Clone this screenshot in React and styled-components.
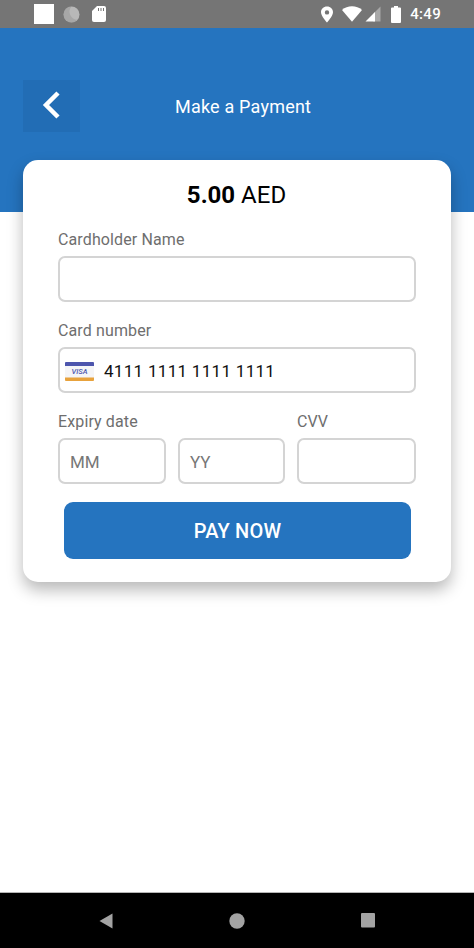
import React from "react";
import styled, { createGlobalStyle } from "styled-components";

const Global = createGlobalStyle`
  html, body { margin: 0; padding: 0; background: #fff; }
  * { box-sizing: border-box; }
  body { font-family: Roboto, "Liberation Sans", sans-serif; }
`;

const Screen = styled.div`
  width: 474px;
  height: 948px;
  display: flex;
  flex-direction: column;
  overflow: hidden;
  background: #fff;
`;

const StatusBar = styled.div`
  height: 28px;
  flex: none;
  background: #757575;
  display: flex;
  align-items: center;
  justify-content: space-between;
  padding: 0 33px 0 34px;
`;

const StatusGroup = styled.div`
  display: flex;
  align-items: center;
`;

const StatusIcon = styled.span`
  display: flex;
  margin-left: ${(p) => p.$ml ?? 0}px;
`;

const WhiteSquare = styled.div`
  width: 20px;
  height: 20px;
  background: #fff;
`;

const Clock = styled.span`
  color: #fff;
  font-size: 15px;
  font-weight: 500;
  letter-spacing: 0.3px;
  margin-left: 9px;
`;

const Header = styled.header`
  height: 184px;
  flex: none;
  background: #2574bf;
  padding: 52px 23px 0;
  display: flex;
  align-items: flex-start;
`;

const BackButton = styled.button`
  width: 57px;
  height: 52px;
  flex: none;
  border: 0;
  padding: 0 2px 2px 0;
  background: #226db5;
  display: flex;
  align-items: center;
  justify-content: center;
`;

const Title = styled.h1`
  margin: 0;
  flex: 1;
  height: 52px;
  line-height: 54px;
  padding-left: 95px;
  color: #fff;
  font-size: 18px;
  font-weight: 400;
  letter-spacing: 0.2px;
`;

const Card = styled.main`
  flex: none;
  width: 428px;
  height: 422px;
  margin: -52px 0 0 23px;
  padding: 21px 35px 0;
  background: #fff;
  border-radius: 15px;
  box-shadow: 0 8px 16px rgba(0, 0, 0, 0.28);
  position: relative;
`;

const Amount = styled.div`
  text-align: center;
  font-size: 24px;
  line-height: 28px;
  color: #000;
  margin-bottom: 21px;
  padding-right: 1px;
`;

const AmountValue = styled.strong`
  font-weight: 700;
`;

const Field = styled.div`
  display: flex;
  flex-direction: column;
  margin-bottom: ${(p) => p.$mb ?? 0}px;
`;

const Label = styled.label`
  font-size: 16px;
  line-height: 20px;
  color: #6e6e6e;
  margin-bottom: 6px;
  letter-spacing: 0.12px;
`;

const InputBox = styled.div`
  height: 46px;
  border: 2px solid #d4d4d4;
  border-radius: 7px;
  background: #fff;
  display: flex;
  align-items: center;
  padding: 2px ${(p) => p.$pad ?? 10}px 0;
  font-size: 17px;
  color: ${(p) => (p.$muted ? "#777" : "#111")};
  width: ${(p) => (p.$width ? `${p.$width}px` : "auto")};
`;

const CardNumber = styled.span`
  margin-left: 10px;
  letter-spacing: 0.3px;
`;

const Row = styled.div`
  display: flex;
  gap: 12px;
  margin-top: 19px;
`;

const Pair = styled.div`
  display: flex;
  gap: 12px;
`;

const PayButton = styled.button`
  display: block;
  width: 347px;
  height: 57px;
  margin: 18px 0 0 6px;
  border: 0;
  border-radius: 9px;
  background: #2574bf;
  color: #fff;
  font-family: inherit;
  font-size: 20px;
  font-weight: 500;
  letter-spacing: 0.2px;
`;

const Spacer = styled.div`
  flex: 1;
`;

const NavBar = styled.nav`
  height: 56px;
  flex: none;
  background: #000;
  border-top: 1px solid #b5b5b5;
  display: flex;
  align-items: center;
  justify-content: center;
  gap: 116px;
  padding: 0 1px 0 0;
`;

const Pin = () => (
  <svg width="14" height="17" viewBox="0 0 14 17">
    <path fillRule="evenodd" fill="#fff" d="M7 .5C3.400.5 1 3 1 6.200 1 10 7 16.500 7 16.500S13 10 13 6.200C13 3 10.600.5 7 .5Zm0 3.700a2.200 2.200 0 1 1 0 4.400 2.200 2.200 0 0 1 0-4.400Z" />
  </svg>
);

const Wifi = () => (
  <svg width="20" height="16" viewBox="0 0 20 16">
    <path fill="#fff" d="M0 4C2.800 1.600 6.200.3 10 .3S17.200 1.600 20 4L10 15.700Z" />
  </svg>
);

const Signal = () => (
  <svg width="16" height="16" viewBox="0 0 16 16">
    <path fill="#a8a8a8" d="M15.500 .5V15.500H8V8Z" />
    <path fill="#fff" d="M10 6V15.500H.5Z" />
  </svg>
);

const Battery = () => (
  <svg width="10" height="17" viewBox="0 0 10 17">
    <path fill="#fff" d="M3 0h4v1.500h2a1 1 0 0 1 1 1V16a1 1 0 0 1-1 1H1a1 1 0 0 1-1-1V2.500a1 1 0 0 1 1-1h2Z" />
  </svg>
);

const SdCard = () => (
  <svg width="14" height="16" viewBox="0 0 14 16">
    <path fill="#fff" d="M5 0H12a2 2 0 0 1 2 2V14a2 2 0 0 1-2 2H2a2 2 0 0 1-2-2V5Z" />
    <path fill="#757575" d="M6 2h1v3H6ZM8.500 2h1v3h-1ZM11 2h1v3h-1Z" />
  </svg>
);

const CircleStatus = () => (
  <svg width="17" height="17" viewBox="0 0 17 17">
    <circle cx="8.500" cy="8.500" r="8" fill="#b8b8b8" />
    <path fill="#8f8f8f" d="M8.500.5a8 8 0 0 0 0 16 8 8 0 0 0 6-2.800A8 8 0 0 1 8.500.5Z" opacity=".4" />
  </svg>
);

const Chevron = () => (
  <svg width="22" height="30" viewBox="0 0 22 30">
    <path d="M18 3 6 15l12 12" fill="none" stroke="#fff" strokeWidth="4.500" />
  </svg>
);

const VisaIcon = () => (
  <svg width="29" height="19" viewBox="0 0 29 19">
    <rect x="0" y="0" width="29" height="19" rx="1" fill="#f5f5f7" />
    <path fill="#4d55ad" d="M1 0h27a1 1 0 0 1 1 1v3H0V1a1 1 0 0 1 1-1Z" />
    <path fill="#e8a23c" d="M0 15.500h29V18a1 1 0 0 1-1 1H1a1 1 0 0 1-1-1Z" />
    <text x="14.500" y="12.300" textAnchor="middle" fontFamily="Roboto, sans-serif" fontSize="7.500" fontStyle="italic" fontWeight="500" fill="#4d55ad">VISA</text>
  </svg>
);

const NavBack = () => (
  <svg width="14" height="16" viewBox="0 0 14 16">
    <path fill="#a3a3a3" d="M13.500 .5V15.500L.5 8Z" />
  </svg>
);

const NavHome = () => (
  <svg width="16" height="16" viewBox="0 0 16 16">
    <circle cx="8" cy="8" r="7.700" fill="#a3a3a3" />
  </svg>
);

const NavRecent = () => (
  <svg width="14" height="15" viewBox="0 0 14 15">
    <rect width="14" height="14.500" rx="1" fill="#a3a3a3" />
  </svg>
);

export default function App() {
  return (
    <Screen>
      <Global />
      <StatusBar>
        <StatusGroup>
          <WhiteSquare />
          <StatusIcon $ml={9}><CircleStatus /></StatusIcon>
          <StatusIcon $ml={12}><SdCard /></StatusIcon>
        </StatusGroup>
        <StatusGroup>
          <StatusIcon><Pin /></StatusIcon>
          <StatusIcon $ml={8}><Wifi /></StatusIcon>
          <StatusIcon $ml={3}><Signal /></StatusIcon>
          <StatusIcon $ml={10}><Battery /></StatusIcon>
          <Clock>4:49</Clock>
        </StatusGroup>
      </StatusBar>
      <Header>
        <BackButton aria-label="Back">
          <Chevron />
        </BackButton>
        <Title>Make a Payment</Title>
      </Header>
      <Card>
        <Amount>
          <AmountValue>5.00</AmountValue> AED
        </Amount>
        <Field $mb={19}>
          <Label>Cardholder Name</Label>
          <InputBox />
        </Field>
        <Field>
          <Label>Card number</Label>
          <InputBox $pad={5}>
            <VisaIcon />
            <CardNumber>4111 1111 1111 1111</CardNumber>
          </InputBox>
        </Field>
        <Row>
          <Field>
            <Label>Expiry date</Label>
            <Pair>
              <InputBox $width={108} $muted>MM</InputBox>
              <InputBox $width={107} $muted>YY</InputBox>
            </Pair>
          </Field>
          <Field>
            <Label>CVV</Label>
            <InputBox $width={119} />
          </Field>
        </Row>
        <PayButton>PAY NOW</PayButton>
      </Card>
      <Spacer />
      <NavBar>
        <NavBack />
        <NavHome />
        <NavRecent />
      </NavBar>
    </Screen>
  );
}
